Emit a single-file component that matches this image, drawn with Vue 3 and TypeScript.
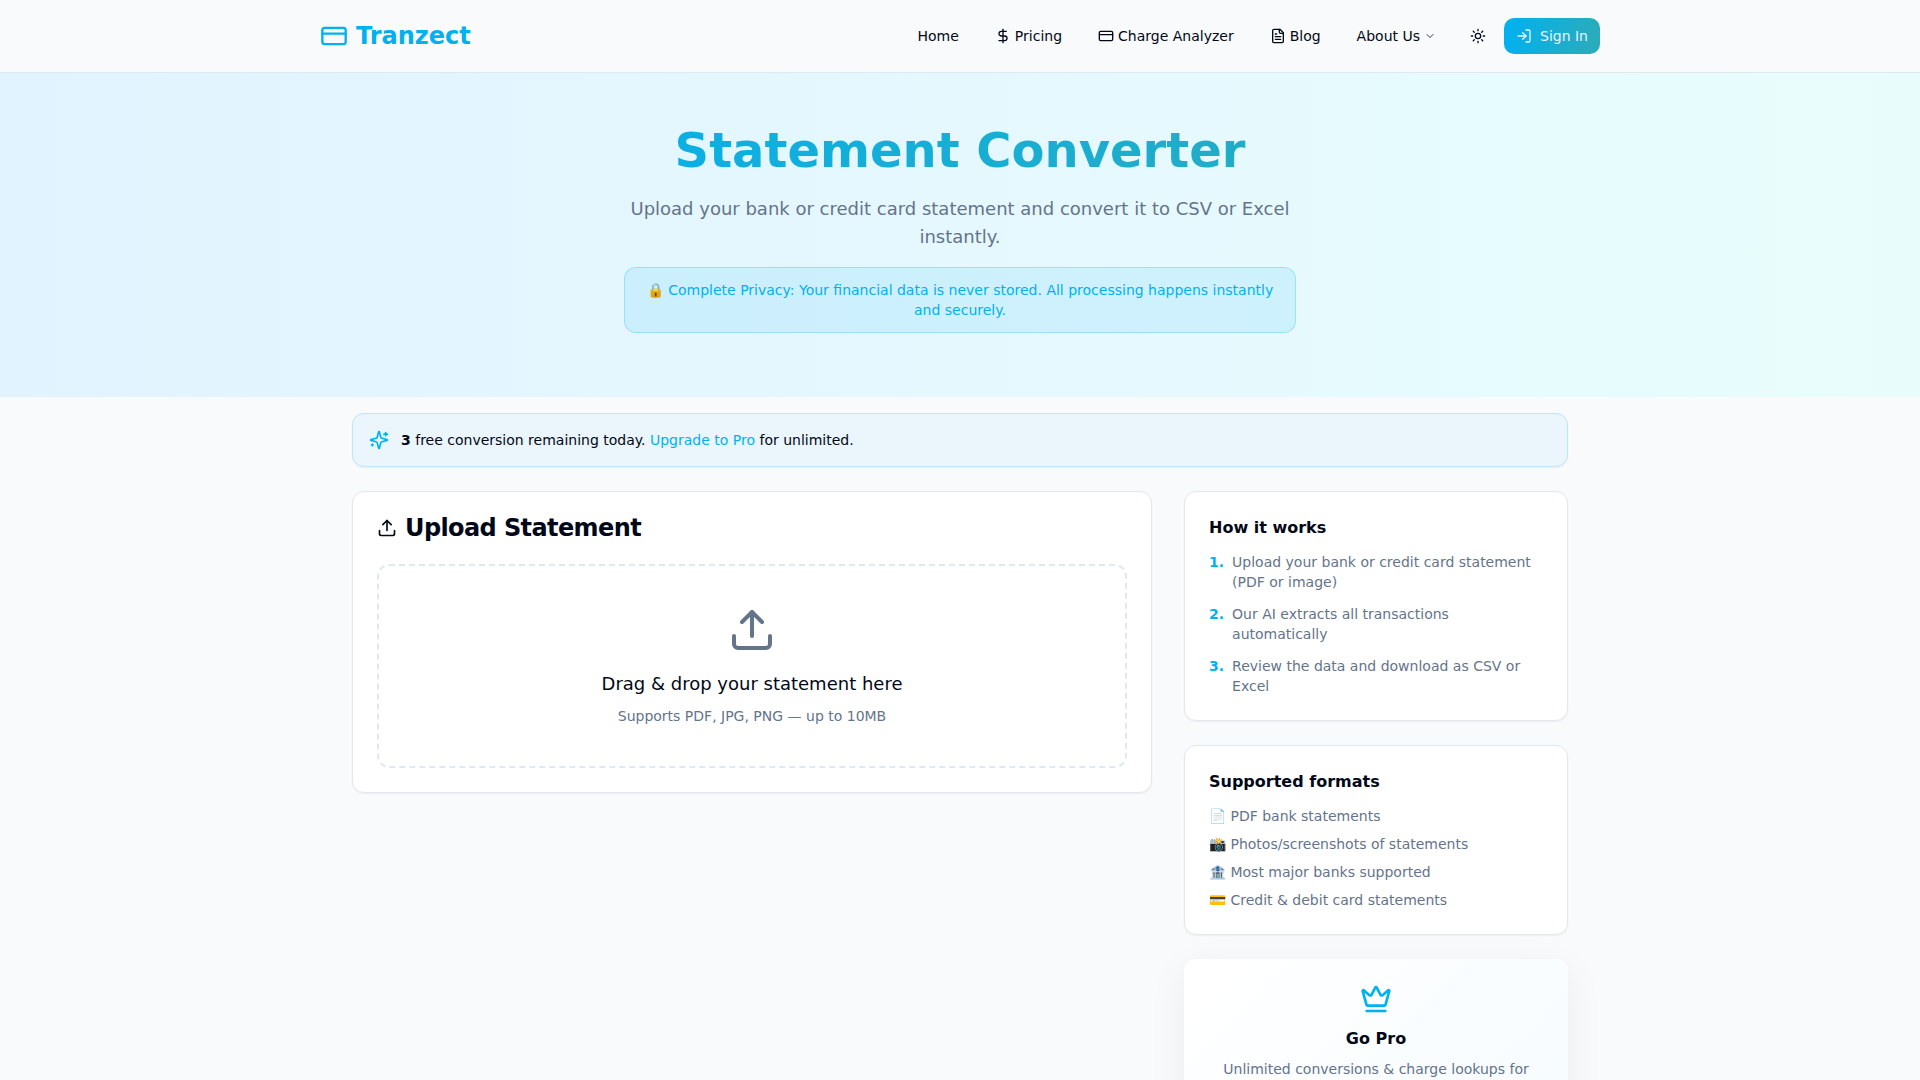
<script setup lang="ts">
interface IconShape {
  tag: string
  attrs: Record<string, string | number>
}

const p = (d: string): IconShape => ({ tag: 'path', attrs: { d } })

const icons: Record<string, IconShape[]> = {
  card: [
    { tag: 'rect', attrs: { width: 20, height: 14, x: 2, y: 5, rx: 2 } },
    p('M2 10h20'),
  ],
  dollar: [p('M12 2v20'), p('M17 5H9.5a3.5 3.5 0 0 0 0 7h5a3.5 3.5 0 0 1 0 7H6')],
  file: [
    p('M15 2H6a2 2 0 0 0-2 2v16a2 2 0 0 0 2 2h12a2 2 0 0 0 2-2V7Z'),
    p('M14 2v4a2 2 0 0 0 2 2h4'),
    p('M10 9H8'),
    p('M16 13H8'),
    p('M16 17H8'),
  ],
}

interface NavItem {
  label: string
  icon?: string
}

const navItems: NavItem[] = [
  { label: 'Home' },
  { label: 'Pricing', icon: 'dollar' },
  { label: 'Charge Analyzer', icon: 'card' },
  { label: 'Blog', icon: 'file' },
]

const steps: string[] = [
  'Upload your bank or credit card statement (PDF or image)',
  'Our AI extracts all transactions automatically',
  'Review the data and download as CSV or Excel',
]

const formats: string[] = [
  '📄 PDF bank statements',
  '📸 Photos/screenshots of statements',
  '🏦 Most major banks supported',
  '💳 Credit & debit card statements',
]
</script>

<template>
  <div class="page">
    <header class="header">
      <div class="header-inner">
        <a href="#" class="logo">
          <svg class="icon icon-28" viewBox="0 0 24 24">
            <component :is="s.tag" v-for="(s, i) in icons.card" :key="i" v-bind="s.attrs" />
          </svg>
          <span>Tranzect</span>
        </a>
        <div class="header-right">
          <nav class="nav">
            <a v-for="item in navItems" :key="item.label" href="#" class="nav-link">
              <svg v-if="item.icon" class="icon icon-16" viewBox="0 0 24 24">
                <component :is="s.tag" v-for="(s, i) in icons[item.icon]" :key="i" v-bind="s.attrs" />
              </svg>
              {{ item.label }}
            </a>
            <button type="button" class="nav-link">
              About Us
              <svg class="icon icon-12" viewBox="0 0 24 24"><path d="m6 9 6 6 6-6" /></svg>
            </button>
          </nav>
          <button type="button" class="theme-toggle" aria-label="Toggle theme">
            <svg class="icon icon-16" viewBox="0 0 24 24">
              <circle cx="12" cy="12" r="4" />
              <path d="M12 2v2M12 20v2M4.93 4.93l1.41 1.41M17.66 17.66l1.41 1.41M2 12h2M20 12h2M6.34 17.66l-1.41 1.41M19.07 4.93l-1.41 1.41" />
            </svg>
          </button>
          <button type="button" class="sign-in">
            <svg class="icon icon-16" viewBox="0 0 24 24">
              <path d="M15 3h4a2 2 0 0 1 2 2v14a2 2 0 0 1-2 2h-4" />
              <path d="m10 17 5-5-5-5" />
              <path d="M15 12H3" />
            </svg>
            Sign In
          </button>
        </div>
      </div>
    </header>

    <section class="hero">
      <div class="hero-inner">
        <h1>Statement Converter</h1>
        <p class="lead">Upload your bank or credit card statement and convert it to CSV or Excel instantly.</p>
        <p class="privacy">🔒 Complete Privacy: Your financial data is never stored. All processing happens instantly and securely.</p>
      </div>
    </section>

    <main class="content">
      <div class="quota">
        <svg class="icon icon-20 accent" viewBox="0 0 24 24">
          <path d="M9.937 15.5A2 2 0 0 0 8.5 14.063l-6.135-1.582a.5.5 0 0 1 0-.962L8.5 9.936A2 2 0 0 0 9.937 8.5l1.582-6.135a.5.5 0 0 1 .963 0L14.063 8.5A2 2 0 0 0 15.5 9.937l6.135 1.581a.5.5 0 0 1 0 .964L15.5 14.063a2 2 0 0 0-1.437 1.437l-1.582 6.135a.5.5 0 0 1-.963 0z" />
          <path d="M20 3v4M22 5h-4M4 17v2M5 18H3" />
        </svg>
        <p><strong>3</strong> free conversion remaining today. <a href="#">Upgrade to Pro</a> for unlimited.</p>
      </div>

      <div class="columns">
        <section class="card upload">
          <h2>
            <svg class="icon icon-20" viewBox="0 0 24 24">
              <path d="M21 15v4a2 2 0 0 1-2 2H5a2 2 0 0 1-2-2v-4" />
              <path d="m17 8-5-5-5 5" />
              <path d="M12 3v12" />
            </svg>
            Upload Statement
          </h2>
          <button type="button" class="dropzone">
            <svg class="icon icon-48" viewBox="0 0 24 24">
              <path d="M21 15v4a2 2 0 0 1-2 2H5a2 2 0 0 1-2-2v-4" />
              <path d="m17 8-5-5-5 5" />
              <path d="M12 3v12" />
            </svg>
            <span class="drop-title">Drag &amp; drop your statement here</span>
            <span class="drop-hint">Supports PDF, JPG, PNG — up to 10MB</span>
          </button>
        </section>

        <aside class="side">
          <section class="card">
            <h3>How it works</h3>
            <ol class="steps">
              <li v-for="(step, i) in steps" :key="step">
                <span class="num">{{ i + 1 }}.</span>
                <span>{{ step }}</span>
              </li>
            </ol>
          </section>
          <section class="card">
            <h3>Supported formats</h3>
            <ul class="formats">
              <li v-for="format in formats" :key="format">{{ format }}</li>
            </ul>
          </section>
          <section class="pro">
            <svg class="icon icon-32 accent" viewBox="0 0 24 24">
              <path d="M11.562 3.266a.5.5 0 0 1 .876 0L15.39 8.87a1 1 0 0 0 1.516.294L21.183 5.5a.5.5 0 0 1 .798.519l-2.834 10.246a1 1 0 0 1-.956.734H5.81a1 1 0 0 1-.957-.734L2.02 6.02a.5.5 0 0 1 .798-.519l4.276 3.664a1 1 0 0 0 1.516-.294z" />
              <path d="M5 21h14" />
            </svg>
            <h3>Go Pro</h3>
            <p>Unlimited conversions &amp; charge lookups for</p>
          </section>
        </aside>
      </div>
    </main>
  </div>
</template>

<style>
body {
  margin: 0;
  background: #f9fafc;
}
</style>

<style scoped>
.page {
  --primary: #00b1f2;
  --teal: #2dabb8;
  --text: #020817;
  --muted: #64748b;
  --border: #e2e8f0;
  height: 100vh;
  overflow: hidden;
  background: #f9fafc;
  color: var(--text);
  font-family: "DejaVu Sans", sans-serif;
  font-size: 14px;
  line-height: 20px;
}

.page * {
  box-sizing: border-box;
}

h1, h2, h3, p, ol, ul {
  margin: 0;
  padding: 0;
}

ol, ul {
  list-style: none;
}

a {
  color: inherit;
  text-decoration: none;
}

button {
  margin: 0;
  padding: 0;
  border: 0;
  background: none;
  color: inherit;
  font: inherit;
  cursor: pointer;
}

.icon {
  display: block;
  flex: none;
  fill: none;
  stroke: currentColor;
  stroke-width: 2;
  stroke-linecap: round;
  stroke-linejoin: round;
}

.icon-12 { width: 12px; height: 12px; opacity: 0.8; }
.icon-16 { width: 16px; height: 16px; }
.icon-20 { width: 20px; height: 20px; }
.icon-28 { width: 28px; height: 28px; }
.icon-32 { width: 32px; height: 32px; }
.icon-48 { width: 48px; height: 48px; }
.accent { color: var(--primary); }

.header {
  border-bottom: 1px solid var(--border);
}

.header-inner {
  display: flex;
  align-items: center;
  justify-content: space-between;
  max-width: 1280px;
  margin: 0 auto;
  padding: 18px 0;
}

.logo {
  display: flex;
  align-items: center;
  gap: 8px;
  color: var(--primary);
  font-size: 24px;
  font-weight: 700;
  line-height: 32px;
}

.header-right {
  display: flex;
  align-items: center;
  gap: 8px;
}

.nav {
  display: flex;
  gap: 4px;
}

.nav-link {
  display: flex;
  align-items: center;
  gap: 4px;
  padding: 8px 16px;
}

.theme-toggle {
  display: flex;
  align-items: center;
  justify-content: center;
  width: 36px;
  height: 36px;
}

.sign-in {
  display: flex;
  align-items: center;
  gap: 8px;
  height: 36px;
  padding: 0 12px;
  border-radius: 10px;
  background: linear-gradient(100deg, var(--primary), var(--teal));
  color: #e6f5fc;
}

.hero {
  padding: 48px 16px 64px;
  background: linear-gradient(90deg, #e1f3fe, #e6f9fe 60%, #e6fcfd 80%, #e8fdfb);
  text-align: center;
}

.hero-inner {
  max-width: 1216px;
  margin: 0 auto;
}

h1 {
  margin-bottom: 16px;
  background: linear-gradient(90deg, var(--primary), var(--teal));
  background-clip: text;
  color: transparent;
  font-size: 48px;
  font-weight: 700;
  line-height: 58px;
}

.lead,
.privacy {
  max-width: 672px;
  margin: 0 auto;
}

.lead {
  margin-bottom: 16px;
  color: var(--muted);
  font-size: 18px;
  line-height: 28px;
}

.privacy {
  padding: 12px 16px;
  border: 1px solid rgb(0 177 242 / 0.25);
  border-radius: 12px;
  background: rgb(0 177 242 / 0.1);
  color: var(--primary);
}

.content {
  max-width: 1216px;
  margin: 0 auto;
  padding: 16px 0 48px;
}

.quota {
  display: flex;
  align-items: center;
  gap: 12px;
  margin-bottom: 24px;
  padding: 16px;
  border: 1px solid #b9e6f9;
  border-radius: 12px;
  background: #eaf5fc;
  box-shadow: 0 1px 2px rgb(0 0 0 / 0.05);
}

.quota a {
  color: var(--primary);
}

.columns {
  display: grid;
  grid-template-columns: repeat(3, minmax(0, 1fr));
  align-items: start;
  gap: 32px;
}

.card {
  padding: 24px;
  border: 1px solid var(--border);
  border-radius: 12px;
  background: #fff;
  box-shadow: 0 1px 2px rgb(0 0 0 / 0.05);
}

.upload {
  grid-column: span 2;
}

h2 {
  display: flex;
  align-items: center;
  gap: 8px;
  margin-bottom: 24px;
  font-size: 24px;
  font-weight: 700;
  line-height: 24px;
  letter-spacing: -0.025em;
}

.dropzone {
  display: flex;
  flex-direction: column;
  align-items: center;
  width: 100%;
  padding: 40px;
  border: 2px dashed var(--border);
  border-radius: 12px;
  color: var(--muted);
}

.drop-title {
  margin: 16px 0 8px;
  color: var(--text);
  font-size: 18px;
  line-height: 28px;
}

.side {
  display: flex;
  flex-direction: column;
  gap: 24px;
}

h3 {
  margin-bottom: 12px;
  font-size: 16px;
  font-weight: 700;
  line-height: 24px;
}

.steps,
.formats {
  display: flex;
  flex-direction: column;
  gap: 12px;
  color: var(--muted);
}

.formats {
  gap: 8px;
}

.steps li {
  display: flex;
  gap: 8px;
}

.num {
  color: var(--primary);
  font-weight: 700;
}

.pro {
  display: flex;
  flex-direction: column;
  align-items: center;
  min-height: 220px;
  padding: 24px;
  border-radius: 12px;
  background: linear-gradient(135deg, #fff, #f5fbff);
  box-shadow: 0 10px 40px rgb(0 0 0 / 0.06);
  text-align: center;
}

.pro h3 {
  margin: 12px 0 8px;
}

.pro p {
  color: var(--muted);
}
</style>
